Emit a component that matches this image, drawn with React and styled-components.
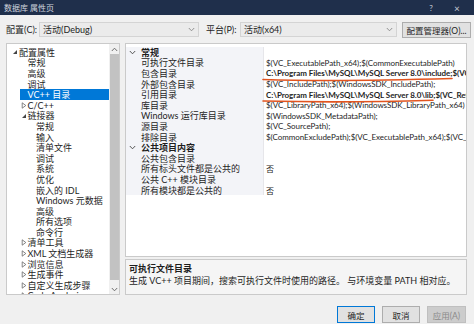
import React from "react"
import styled, { createGlobalStyle } from "styled-components"

const GlobalStyle = createGlobalStyle`
body {
  margin: 0;
  background: #f0f0f0;
  font-family: Lato, "Noto Sans CJK SC", sans-serif;
  color: #1e1e1e;
}
`

const Window = styled.div`
width: 474px;
height: 324px;
display: flex;
flex-direction: column;
overflow: hidden;
font-size: 9px;
`

const TitleBar = styled.div`
height: 15px;
background: #1f2f4b;
color: #cfd5df;
display: flex;
align-items: center;
padding: 0 4px;
font-size: 8px;
`

const TitleText = styled.div`
flex: 1;
`

const TitleButton = styled.div`
width: 26px;
text-align: center;
color: #c4cad4;
font-size: ${(p) => p.size || 8}px;
`

const ConfigRow = styled.div`
display: flex;
align-items: center;
height: 15px;
margin-top: 7px;
padding-left: 6px;
`

const Label = styled.div`
width: ${(p) => p.width}px;
white-space: nowrap;
flex-shrink: 0;
`

const Combo = styled.div`
width: ${(p) => p.width}px;
height: 13px;
margin-right: ${(p) => p.gap || 0}px;
background: #ebebeb;
border: 1px solid #d4d4d4;
display: flex;
align-items: center;
padding: 0 3px;
flex-shrink: 0;
`

const ComboText = styled.div`
flex: 1;
`

const Arrow = styled.svg`
width: 7px;
height: 5px;
`

const Button = styled.div`
width: ${(p) => p.width}px;
height: ${(p) => p.height || 14}px;
background: ${(p) => (p.disabled ? "#cccccc" : "#e1e1e1")};
border: 1px solid ${(p) => (p.primary ? "#0078d7" : p.disabled ? "#bfbfbf" : "#adadad")};
color: ${(p) => (p.disabled ? "#8a8a8a" : "#1e1e1e")};
display: flex;
align-items: center;
justify-content: center;
font-size: 8.5px;
white-space: nowrap;
flex-shrink: 0;
`

const Main = styled.div`
display: flex;
gap: 5px;
height: 252px;
margin-top: 6px;
padding: 0 7px 0 6px;
`

const TreePanel = styled.div`
width: 112px;
flex-shrink: 0;
background: #fff;
border: 1px solid #cacaca;
display: flex;
overflow: hidden;
`

const TreeList = styled.div`
flex: 1;
min-width: 0;
padding-top: 3px;
overflow: hidden;
`

const TreeRow = styled.div`
display: flex;
align-items: center;
height: 10.6px;
margin-left: ${(p) => 4 + p.level * 8.5}px;
background: ${(p) => (p.selected ? "#0078d7" : "transparent")};
color: ${(p) => (p.selected ? "#fff" : "#1e1e1e")};
white-space: nowrap;
`

const Expander = styled.div`
width: 8px;
height: 10px;
display: flex;
align-items: center;
justify-content: center;
flex-shrink: 0;
`

const ScrollBar = styled.div`
width: 10px;
flex-shrink: 0;
background: #f0f0f0;
display: flex;
flex-direction: column;
align-items: center;
`

const ScrollArrow = styled.div`
height: 10px;
display: flex;
align-items: center;
justify-content: center;
`

const Thumb = styled.div`
width: 9px;
flex: 1;
margin: 0 0 4px;
background: #c2c2c2;
`

const RightColumn = styled.div`
flex: 1;
min-width: 0;
display: flex;
flex-direction: column;
gap: 2px;
`

const Grid = styled.div`
flex: 1;
background: #fff;
border: 1px solid #cacaca;
padding-top: 3px;
overflow: hidden;
position: relative;
`

const GridRow = styled.div`
display: flex;
height: 10.6px;
align-items: center;
`

const Margin = styled.div`
width: 12px;
height: 100%;
background: #f3f4f8;
display: flex;
align-items: center;
justify-content: center;
flex-shrink: 0;
`

const NameCell = styled.div`
width: 122px;
height: 100%;
padding-left: 3px;
display: flex;
align-items: center;
background: #f3f4f8;
border-right: 1px solid #e6e6ea;
font-weight: ${(p) => (p.bold ? 700 : 400)};
white-space: nowrap;
overflow: hidden;
flex-shrink: 0;
`

const ValueCell = styled.div`
flex: 1;
min-width: 0;
padding-left: 2px;
font-weight: ${(p) => (p.bold ? 700 : 400)};
font-size: 8px;
white-space: nowrap;
overflow: hidden;
letter-spacing: -0.05px;
`

const Scribble = styled.svg`
position: absolute;
left: 136px;
top: 0;
width: 210px;
height: 120px;
pointer-events: none;
`

const Desc = styled.div`
height: 31px;
background: #f5f5f5;
border: 1px solid #cacaca;
padding: 3px 3px 0;
line-height: 12px;
white-space: nowrap;
overflow: hidden;
`

const DescTitle = styled.div`
font-weight: 700;
`

const Footer = styled.div`
display: flex;
justify-content: flex-end;
gap: 7px;
padding: 11px 8px 0 0;
`

const tree = [
  { label: "配置属性", level: 0, exp: "open" },
  { label: "常规", level: 1 },
  { label: "高级", level: 1 },
  { label: "调试", level: 1 },
  { label: "VC++ 目录", level: 1, selected: true },
  { label: "C/C++", level: 1, exp: "closed" },
  { label: "链接器", level: 1, exp: "open" },
  { label: "常规", level: 2 },
  { label: "输入", level: 2 },
  { label: "清单文件", level: 2 },
  { label: "调试", level: 2 },
  { label: "系统", level: 2 },
  { label: "优化", level: 2 },
  { label: "嵌入的 IDL", level: 2 },
  { label: "Windows 元数据", level: 2 },
  { label: "高级", level: 2 },
  { label: "所有选项", level: 2 },
  { label: "命令行", level: 2 },
  { label: "清单工具", level: 1, exp: "closed" },
  { label: "XML 文档生成器", level: 1, exp: "closed" },
  { label: "浏览信息", level: 1, exp: "closed" },
  { label: "生成事件", level: 1, exp: "closed" },
  { label: "自定义生成步骤", level: 1, exp: "closed" },
  { label: "Code Analysis", level: 1, exp: "closed" },
]

const props = [
  { header: "常规" },
  { name: "可执行文件目录", value: "$(VC_ExecutablePath_x64);$(CommonExecutablePath)" },
  { name: "包含目录", value: "C:\\Program Files\\MySQL\\MySQL Server 8.0\\include;$(VC_IncludePath);$(WindowsSDK_IncludePath);", bold: true },
  { name: "外部包含目录", value: "$(VC_IncludePath);$(WindowsSDK_IncludePath);" },
  { name: "引用目录", value: "C:\\Program Files\\MySQL\\MySQL Server 8.0\\lib;$(VC_ReferencesPath_x64);", bold: true },
  { name: "库目录", value: "$(VC_LibraryPath_x64);$(WindowsSDK_LibraryPath_x64)" },
  { name: "Windows 运行库目录", value: "$(WindowsSDK_MetadataPath);" },
  { name: "源目录", value: "$(VC_SourcePath);" },
  { name: "排除目录", value: "$(CommonExcludePath);$(VC_ExecutablePath_x64);$(VC_LibraryPath_x64)" },
  { header: "公共项目内容" },
  { name: "公共包含目录", value: "" },
  { name: "所有标头文件都是公共的", value: "否" },
  { name: "公共 C++ 模块目录", value: "" },
  { name: "所有模块都是公共的", value: "否" },
]

const Chevron = ({ color = "#555" }) => (
  <Arrow viewBox="0 0 7 5">
    <path d="M0.8 1 L3.5 3.8 L6.2 1" fill="none" stroke={color} strokeWidth="0.9" />
  </Arrow>
)

const ExpanderIcon = ({ type, selected }) => {
  if (type === "open")
    return (
      <svg width="6" height="6" viewBox="0 0 6 6">
        <path d="M5 1 L5 5 L1 5 Z" fill={selected ? "#fff" : "#444"} />
      </svg>
    )
  if (type === "closed")
    return (
      <svg width="6" height="7" viewBox="0 0 6 7">
        <path d="M1.2 0.8 L4.8 3.5 L1.2 6.2 Z" fill="none" stroke="#666" strokeWidth="0.8" />
      </svg>
    )
  return null
}

export default function App() {
  return (
    <Window>
      <GlobalStyle />
      <TitleBar>
        <TitleText>数据库 属性页</TitleText>
        <TitleButton>?</TitleButton>
        <TitleButton size={10}>×</TitleButton>
      </TitleBar>

      <ConfigRow>
        <Label width={33}>配置(C):</Label>
        <Combo width={152} gap={7}>
          <ComboText>活动(Debug)</ComboText>
          <Chevron color="#888" />
        </Combo>
        <Label width={34}>平台(P):</Label>
        <Combo width={149} gap={5}>
          <ComboText>活动(x64)</ComboText>
          <Chevron color="#888" />
        </Combo>
        <Button width={67} height={14}>配置管理器(O)...</Button>
      </ConfigRow>

      <Main>
        <TreePanel>
          <TreeList>
            {tree.map((t, i) => (
              <TreeRow key={i} level={t.level} selected={t.selected}>
                <Expander>
                  <ExpanderIcon type={t.exp} selected={t.selected} />
                </Expander>
                {t.label}
              </TreeRow>
            ))}
          </TreeList>
          <ScrollBar>
            <ScrollArrow>
              <svg width="7" height="5" viewBox="0 0 7 5">
                <path d="M0.8 4 L3.5 1.2 L6.2 4" fill="none" stroke="#606060" strokeWidth="0.9" />
              </svg>
            </ScrollArrow>
            <Thumb />
            <ScrollArrow>
              <Chevron color="#606060" />
            </ScrollArrow>
          </ScrollBar>
        </TreePanel>

        <RightColumn>
          <Grid>
            {props.map((p, i) =>
              p.header ? (
                <GridRow key={i}>
                  <Margin>
                    <Chevron color="#444" />
                  </Margin>
                  <NameCell bold>{p.header}</NameCell>
                  <ValueCell />
                </GridRow>
              ) : (
                <GridRow key={i}>
                  <Margin />
                  <NameCell>{p.name}</NameCell>
                  <ValueCell bold={p.bold}>{p.value}</ValueCell>
                </GridRow>
              )
            )}
            <Scribble viewBox="0 0 210 120">
              <path d="M1 35.5 C40 36.8 120 36.5 190 34.5" fill="none" stroke="#e2541f" strokeWidth="1.6" strokeLinecap="round" />
              <path d="M1 57 C50 58.2 120 57.8 171 56.3" fill="none" stroke="#e2541f" strokeWidth="1.6" strokeLinecap="round" />
            </Scribble>
          </Grid>
          <Desc>
            <DescTitle>可执行文件目录</DescTitle>
            <div>生成 VC++ 项目期间，搜索可执行文件时使用的路径。 与环境变量 PATH 相对应。</div>
          </Desc>
        </RightColumn>
      </Main>

      <Footer>
        <Button width={36} height={15} primary>确定</Button>
        <Button width={36} height={15}>取消</Button>
        <Button width={37} height={15} disabled>应用(A)</Button>
      </Footer>
    </Window>
  )
}
